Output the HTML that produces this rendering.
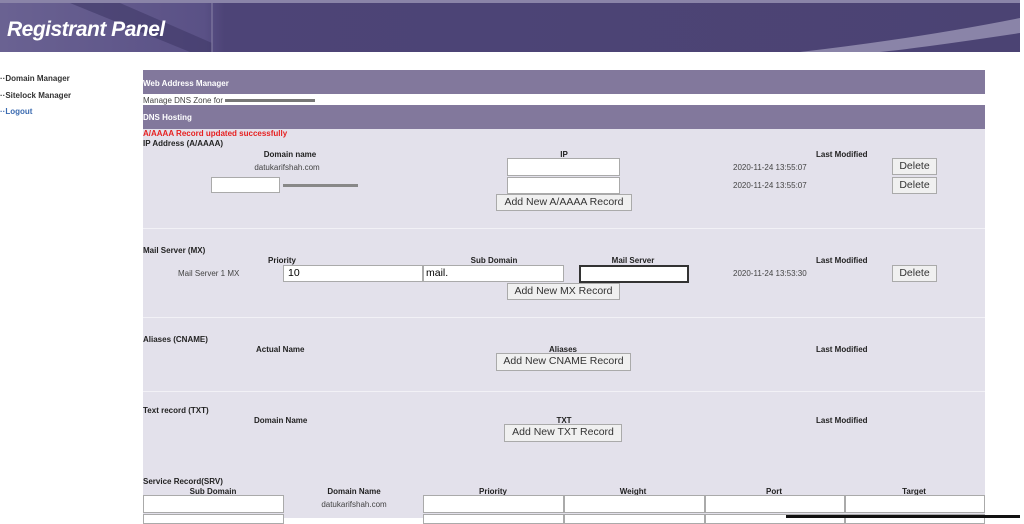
<!DOCTYPE html>
<html><head><meta charset="utf-8"><style>
body{margin:0;width:1024px;height:518px;overflow:hidden;background:#fff;font-family:"Liberation Sans",Arial,sans-serif;position:relative}
div,span,input,button{position:absolute;box-sizing:border-box}
.b{font-weight:bold;font-size:8px;color:#222;white-space:nowrap}
.n{font-size:8px;color:#444;white-space:nowrap}
.c{transform:translateX(-50%)}
.in{background:#fff;border:1px solid #aaa}
.btn{background:#f0f0f0;border:1px solid #aaa;font-size:10.5px;color:#333;text-align:center;line-height:15px;white-space:nowrap}
.sep{left:143px;width:842px;height:1px;background:#f2f1f6}
</style></head><body>
<div style="left:0;top:0;width:1020px;height:3px;background:#8a84a8"></div>
<div style="left:0;top:3px;width:1020px;height:49px;background:linear-gradient(90deg,#6a6292 0%,#5a5186 20%,#4d4477 22%,#4b4373 100%)"></div>
<svg style="position:absolute;left:0;top:3px" width="1020" height="49"><path d="M70 0 L120 0 L212 40 L212 49 L190 49 Z" fill="#3f3868" opacity=".6"/><path d="M800 49 Q920 35 1020 15 L1020 30 Q920 45 880 49Z" fill="#8a84a8"/><line x1="212" y1="0" x2="212" y2="49" stroke="#8a84a8"/></svg>
<div style="left:7px;top:18px;font-size:21px;font-style:italic;font-weight:bold;color:#fff;letter-spacing:-0.5px">Registrant Panel</div>
<div class="b" style="left:0;top:74px;color:#333">··Domain Manager</div>
<div class="b" style="left:0;top:91px;color:#333">··Sitelock Manager</div>
<div class="b" style="left:0;top:107px;color:#3a6ab0">··Logout</div>
<div style="left:143px;top:70px;width:842px;height:24px;background:#82789c"></div>
<div class="b" style="left:143px;top:79px;color:#fff">Web Address Manager</div>
<div class="n" style="left:143px;top:96px">Manage DNS Zone for <span style="position:static;display:inline-block;width:90px;height:3px;background:#777;vertical-align:middle"></span></div>
<div style="left:143px;top:105px;width:842px;height:24px;background:#82789c"></div>
<div class="b" style="left:143px;top:113px;color:#fff">DNS Hosting</div>
<div style="left:143px;top:129px;width:842px;height:389px;background:#e3e1eb"></div>
<div class="sep" style="top:228px"></div><div class="sep" style="top:317px"></div><div class="sep" style="top:391px"></div>
<div class="b" style="left:143px;top:129px;color:#e62020">A/AAAA Record updated successfully</div>
<div class="b" style="left:143px;top:139px">IP Address (A/AAAA)</div>
<div class="b c" style="left:290px;top:150px">Domain name</div>
<div class="b c" style="left:564px;top:150px">IP</div>
<div class="b" style="left:816px;top:150px">Last Modified</div>
<div class="n c" style="left:287px;top:163px">datukarifshah.com</div>
<div class="in" style="left:507px;top:158px;width:113px;height:18px"></div>
<div class="in" style="left:507px;top:177px;width:113px;height:17px"></div>
<div class="in" style="left:211px;top:177px;width:69px;height:16px"></div>
<div style="left:283px;top:184px;width:75px;height:3px;background:#888"></div>
<div class="n" style="left:733px;top:163px">2020-11-24 13:55:07</div>
<div class="n" style="left:733px;top:181px">2020-11-24 13:55:07</div>
<div class="btn" style="left:892px;top:158px;width:45px;height:17px">Delete</div>
<div class="btn" style="left:892px;top:177px;width:45px;height:17px">Delete</div>
<div class="btn" style="left:496px;top:194px;width:136px;height:17px">Add New A/AAAA Record</div>
<div class="b" style="left:143px;top:246px">Mail Server (MX)</div>
<div class="b" style="left:268px;top:256px">Priority</div>
<div class="b c" style="left:494px;top:256px">Sub Domain</div>
<div class="b c" style="left:633px;top:256px">Mail Server</div>
<div class="b" style="left:816px;top:256px">Last Modified</div>
<div class="n" style="left:178px;top:269px">Mail Server 1 MX</div>
<div class="in" style="left:283px;top:265px;width:140px;height:17px;font-size:10.5px;padding-left:4px;line-height:15px">10</div>
<div class="in" style="left:423px;top:265px;width:141px;height:17px;font-size:10.5px;padding-left:2px;line-height:15px">mail.</div>
<div class="in" style="left:579px;top:265px;width:110px;height:18px;border:2px solid #333"></div>
<div class="n" style="left:733px;top:269px">2020-11-24 13:53:30</div>
<div class="btn" style="left:892px;top:265px;width:45px;height:17px">Delete</div>
<div class="btn" style="left:507px;top:283px;width:113px;height:17px">Add New MX Record</div>
<div class="b" style="left:143px;top:335px">Aliases (CNAME)</div>
<div class="b" style="left:256px;top:345px">Actual Name</div>
<div class="b c" style="left:563px;top:345px">Aliases</div>
<div class="b" style="left:816px;top:345px">Last Modified</div>
<div class="btn" style="left:496px;top:353px;width:135px;height:18px">Add New CNAME Record</div>
<div class="b" style="left:143px;top:406px">Text record (TXT)</div>
<div class="b" style="left:254px;top:416px">Domain Name</div>
<div class="b c" style="left:564px;top:416px">TXT</div>
<div class="b" style="left:816px;top:416px">Last Modified</div>
<div class="btn" style="left:504px;top:424px;width:118px;height:18px">Add New TXT Record</div>
<div class="b" style="left:143px;top:477px">Service Record(SRV)</div>
<div class="b c" style="left:213px;top:487px">Sub Domain</div>
<div class="b c" style="left:354px;top:487px">Domain Name</div>
<div class="b c" style="left:493px;top:487px">Priority</div>
<div class="b c" style="left:633px;top:487px">Weight</div>
<div class="b c" style="left:774px;top:487px">Port</div>
<div class="b c" style="left:914px;top:487px">Target</div>
<div class="in" style="left:143px;top:495px;width:141px;height:18px"></div>
<div class="n c" style="left:354px;top:500px">datukarifshah.com</div>
<div class="in" style="left:423px;top:495px;width:141px;height:18px"></div>
<div class="in" style="left:564px;top:495px;width:141px;height:18px"></div>
<div class="in" style="left:705px;top:495px;width:140px;height:18px"></div>
<div class="in" style="left:845px;top:495px;width:140px;height:18px"></div>
<div class="in" style="left:143px;top:514px;width:141px;height:10px"></div>
<div class="in" style="left:423px;top:514px;width:141px;height:10px"></div>
<div class="in" style="left:564px;top:514px;width:141px;height:10px"></div>
<div class="in" style="left:705px;top:514px;width:140px;height:10px"></div>
<div class="in" style="left:845px;top:514px;width:140px;height:10px"></div>
<div style="left:786px;top:515px;width:234px;height:3px;background:#111"></div>
</body></html>
